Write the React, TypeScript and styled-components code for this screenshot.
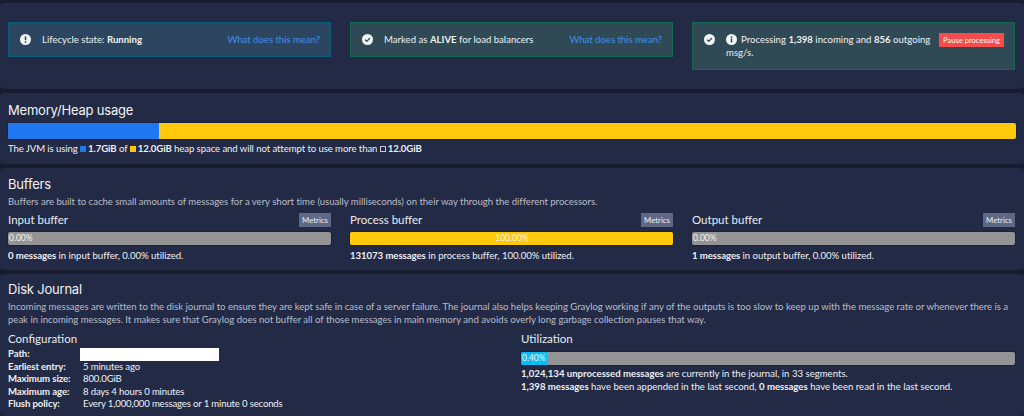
import React from "react";
import styled, { createGlobalStyle } from "styled-components";

const GlobalStyle = createGlobalStyle`
  html, body {
    margin: 0;
    padding: 0;
    height: 416px;
    overflow: hidden;
    background: #171c30;
  }
  * {
    box-sizing: border-box;
  }
`;

const InfoIcon = () => (
  <Icon viewBox="0 0 16 16">
    <circle cx="8" cy="8" r="8" fill="#f4f6fa" />
    <circle cx="8" cy="4.4" r="1.3" fill="#2f4a55" />
    <rect x="6.9" y="6.6" width="2.2" height="5.6" fill="#2f4a55" />
  </Icon>
);

const ExclamationIcon = () => (
  <Icon viewBox="0 0 16 16">
    <circle cx="8" cy="8" r="8" fill="#f4f6fa" />
    <rect x="6.9" y="3.4" width="2.2" height="5.6" fill="#2c4660" />
    <circle cx="8" cy="11.4" r="1.3" fill="#2c4660" />
  </Icon>
);

const CheckIcon = () => (
  <Icon viewBox="0 0 16 16">
    <circle cx="8" cy="8" r="8" fill="#f4f6fa" />
    <path d="M4.4 8.2l2.5 2.5 4.7-4.9" fill="none" stroke="#2f4a55" strokeWidth="2" />
  </Icon>
);

const BufferBlock = ({ title, percent, count, name, used, color }: {
  title: string;
  percent: number;
  count: string;
  name: string;
  used: string;
  color: string;
}) => (
  <div>
    <BufferHeader>
      <SubTitle>{title}</SubTitle>
      <MetricsButton>Metrics</MetricsButton>
    </BufferHeader>
    <Progress>
      <ProgressFill $color={color} style={{ width: `${percent}%` }} />
      <ProgressLabel $center={percent === 100}>{used}</ProgressLabel>
    </Progress>
    <BufferText>
      <b>{count} messages</b> in {name} buffer, {used} utilized.
    </BufferText>
  </div>
);

export default function App() {
  return (
    <Page>
      <GlobalStyle />
      <TopPanel>
        <Alerts>
          <Alert $kind="info">
            <AlertIcon>
              <ExclamationIcon />
            </AlertIcon>
            <AlertBody>
              Lifecycle state: <b>Running</b>
            </AlertBody>
            <HelpLink>What does this mean?</HelpLink>
          </Alert>
          <Alert $kind="success">
            <AlertIcon>
              <CheckIcon />
            </AlertIcon>
            <AlertBody>
              Marked as <b>ALIVE</b> for load balancers
            </AlertBody>
            <HelpLink>What does this mean?</HelpLink>
          </Alert>
          <Alert $kind="success" $tall>
            <AlertIcon>
              <CheckIcon />
            </AlertIcon>
            <ProcessingBody>
              <InlineIcon>
                <InfoIcon />
              </InlineIcon>
              Processing <b>1,398</b> incoming and <b>856</b> outgoing
              <br />
              msg/s.
              <PauseButton>Pause processing</PauseButton>
            </ProcessingBody>
          </Alert>
        </Alerts>
      </TopPanel>

      <MemoryPanel>
        <Title>Memory/Heap usage</Title>
        <HeapBar>
          <HeapUsed />
        </HeapBar>
        <HeapText>
          The JVM is using <Swatch $color="#1f78f0" />
          <b>1.7GiB</b> of <Swatch $color="#fdc90a" />
          <b>12.0GiB</b> heap space and will not attempt to use more than <Swatch $color="#232a45" $outlined />
          <b>12.0GiB</b>
        </HeapText>
      </MemoryPanel>

      <BuffersPanel>
        <Title>Buffers</Title>
        <Description>
          Buffers are built to cache small amounts of messages for a very short time (usually milliseconds) on their way through the different processors.
        </Description>
        <BufferGrid>
          <BufferBlock title="Input buffer" percent={0} count="0" name="input" used="0.00%" color="#fdc90a" />
          <BufferBlock title="Process buffer" percent={100} count="131073" name="process" used="100.00%" color="#fdc90a" />
          <BufferBlock title="Output buffer" percent={0} count="1" name="output" used="0.00%" color="#fdc90a" />
        </BufferGrid>
      </BuffersPanel>

      <JournalPanel>
        <Title>Disk Journal</Title>
        <Description>
          Incoming messages are written to the disk journal to ensure they are kept safe in case of a server failure. The journal also helps keeping Graylog working if any of the outputs is too slow to keep up with the message rate or whenever there is a peak in incoming messages. It makes sure that Graylog does not buffer all of those messages in main memory and avoids overly long garbage collection pauses that way.
        </Description>
        <JournalColumns>
          <div>
            <SubTitle>Configuration</SubTitle>
            <ConfigList>
              <dt>Path:</dt>
              <dd>
                <RedactedPath />
              </dd>
              <dt>Earliest entry:</dt>
              <dd>5 minutes ago</dd>
              <dt>Maximum size:</dt>
              <dd>800.0GiB</dd>
              <dt>Maximum age:</dt>
              <dd>8 days 4 hours 0 minutes</dd>
              <dt>Flush policy:</dt>
              <dd>Every 1,000,000 messages or 1 minute 0 seconds</dd>
            </ConfigList>
          </div>
          <div>
            <SubTitle>Utilization</SubTitle>
            <JournalProgress>
              <ProgressFill $color="#08bdf5" style={{ width: "5.2%" }} />
              <ProgressLabel $center={false}>0.40%</ProgressLabel>
            </JournalProgress>
            <UtilText>
              <b>1,024,134 unprocessed messages</b> are currently in the journal, in 33 segments.
              <br />
              <b>1,398 messages</b> have been appended in the last second, <b>0 messages</b> have been read in the last second.
            </UtilText>
          </div>
        </JournalColumns>
      </JournalPanel>
    </Page>
  );
}

const Page = styled.div`
  width: 1024px;
  height: 416px;
  overflow: hidden;
  padding-top: 3px;
  display: flex;
  flex-direction: column;
  gap: 4px;
  background: #171c30;
  color: #eef0f5;
  font-family: "Lato", "Open Sans", sans-serif;
  font-size: 9.6px;
  line-height: 13px;
  b {
    font-weight: 700;
  }
`;

const Panel = styled.section`
  flex-shrink: 0;
  background: #232a45;
  border-radius: 4px;
  padding: 0 8px;
`;

const TopPanel = styled(Panel)`
  height: 86px;
  padding-top: 19px;
`;

const MemoryPanel = styled(Panel)`
  height: 71px;
  padding-top: 9px;
`;

const BuffersPanel = styled(Panel)`
  height: 102px;
  padding-top: 8px;
`;

const JournalPanel = styled(Panel)`
  height: 142px;
  padding-top: 7px;
`;

const Alerts = styled.div`
  display: grid;
  grid-template-columns: repeat(3, 323px);
  column-gap: 19px;
  align-items: start;
`;

const Alert = styled.div<{ $kind: "info" | "success"; $tall?: boolean }>`
  display: flex;
  align-items: flex-start;
  height: ${(p) => (p.$tall ? "48px" : "35px")};
  padding: 10px 10px 0 11px;
  border: 1px solid ${(p) => (p.$kind === "info" ? "#0b5d7e" : "#166850")};
  background: ${(p) => (p.$kind === "info" ? "#2c4660" : "#2f4a55")};
`;

const AlertIcon = styled.span`
  display: flex;
  width: 22px;
  padding-top: 1px;
  flex-shrink: 0;
`;

const Icon = styled.svg`
  display: block;
  width: 11px;
  height: 11px;
`;

const AlertBody = styled.div`
  flex: 1;
`;

const ProcessingBody = styled.div`
  flex: 1;
  position: relative;
  padding-right: 70px;
`;

const InlineIcon = styled.span`
  display: inline-block;
  vertical-align: -2px;
  margin-right: 4px;
`;

const HelpLink = styled.span`
  color: #3f8ff0;
  letter-spacing: -0.03px;
`;

const PauseButton = styled.span`
  position: absolute;
  top: 0;
  right: 0;
  height: 14px;
  padding: 0 4px;
  background: #f84b4b;
  color: #fff;
  font-size: 7.6px;
  line-height: 14px;
  white-space: nowrap;
`;

const Title = styled.h2`
  margin: 0;
  font-family: "Inter", "Noto Sans", sans-serif;
  font-size: 13px;
  line-height: 17px;
  font-weight: 400;
  letter-spacing: -0.2px;
  color: #f2f3f7;
`;

const SubTitle = styled.h3`
  margin: 0;
  font-size: 11.5px;
  line-height: 15px;
  font-weight: 400;
  color: #e8eaf0;
`;

const HeapBar = styled.div`
  height: 16px;
  margin-top: 4px;
  border-radius: 2px;
  overflow: hidden;
  background: #fdc90a;
  box-shadow: 0 0 0 1px #1b2140;
`;

const HeapUsed = styled.div`
  width: 151px;
  height: 100%;
  background: #1f78f0;
`;

const HeapText = styled.p`
  margin: 3px 0 0;
  letter-spacing: -0.09px;
`;

const Swatch = styled.span<{ $color: string; $outlined?: boolean }>`
  display: inline-block;
  width: 6px;
  height: 6px;
  margin-right: 2px;
  background: ${(p) => p.$color};
  border: ${(p) => (p.$outlined ? "1px solid #c9ccd6" : "none")};
`;

const Description = styled.p`
  margin: 2px 0 0;
  color: #b9bdcb;
  letter-spacing: -0.03px;
`;

const BufferGrid = styled.div`
  display: grid;
  grid-template-columns: repeat(3, 323px);
  column-gap: 19px;
  margin-top: 4px;
`;

const BufferHeader = styled.div`
  display: flex;
  justify-content: space-between;
  align-items: center;
  height: 15px;
`;

const MetricsButton = styled.span`
  width: 32px;
  height: 14px;
  background: #5f6785;
  color: #eef0f5;
  font-size: 7.8px;
  line-height: 14px;
  text-align: center;
`;

const Progress = styled.div`
  position: relative;
  height: 13px;
  margin-top: 5px;
  border-radius: 2px;
  overflow: hidden;
  background: #949494;
  box-shadow: 0 0 0 1px #1b2140;
`;

const JournalProgress = styled(Progress)`
  margin-top: 6px;
`;

const ProgressFill = styled.div<{ $color: string }>`
  height: 100%;
  background: ${(p) => p.$color};
`;

const ProgressLabel = styled.span<{ $center: boolean }>`
  position: absolute;
  inset: 0;
  padding-left: 1px;
  color: #f4f4f4;
  font-size: 8.5px;
  line-height: 13px;
  text-align: ${(p) => (p.$center ? "center" : "left")};
`;

const BufferText = styled.p`
  margin: 4px 0 0;
  letter-spacing: -0.05px;
`;

const JournalColumns = styled.div`
  display: grid;
  grid-template-columns: 513px 494px;
  margin-top: 5px;
`;

const ConfigList = styled.dl`
  display: grid;
  grid-template-columns: 72px 1fr;
  margin: 2px 0 0;
  line-height: 12.4px;
  dt {
    font-weight: 700;
    letter-spacing: -0.1px;
  }
  dd {
    margin: 0 0 0 3px;
    letter-spacing: -0.17px;
  }
`;

const RedactedPath = styled.div`
  width: 139px;
  height: 13px;
  margin-left: -3px;
  background: #fff;
`;

const UtilText = styled.p`
  margin: 3px 0 0;
  line-height: 12.5px;
`;
